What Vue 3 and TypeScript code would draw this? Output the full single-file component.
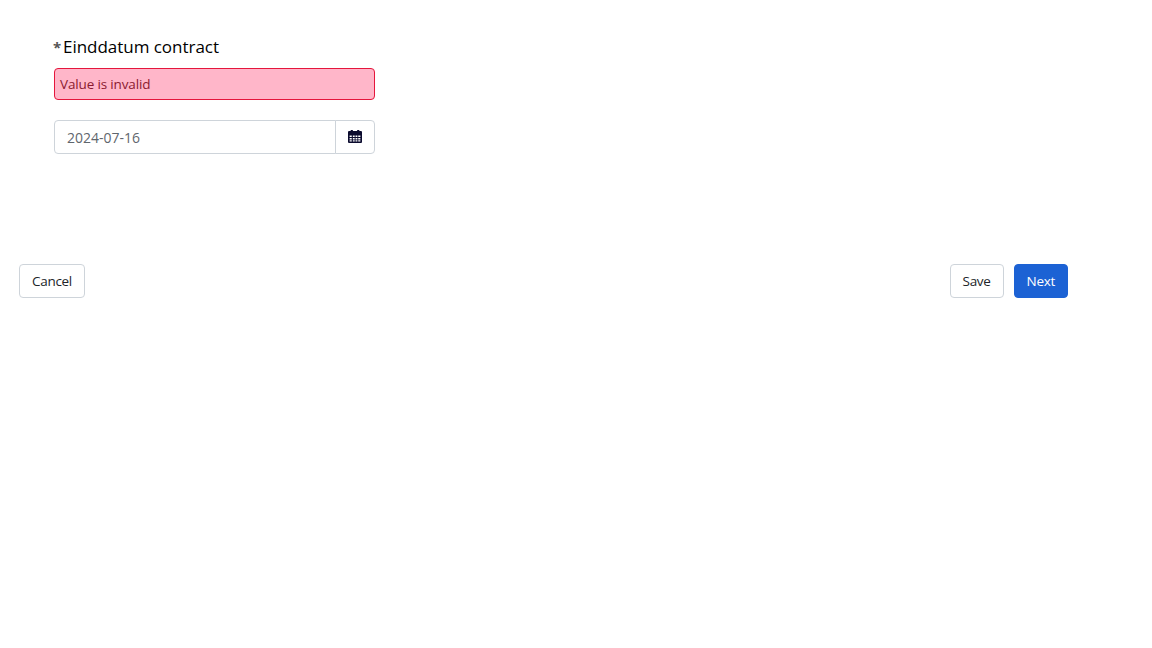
<script setup lang="ts">
const label: string = 'Einddatum contract'
const error: string = 'Value is invalid'
const date: string = '2024-07-16'
</script>

<template>
  <div class="page">
    <form class="form" @submit.prevent>
      <div class="label"><span class="star">*</span><span>{{ label }}</span></div>
      <div class="alert">{{ error }}</div>
      <div class="group">
        <input class="input" type="text" :value="date" />
        <button class="cal" type="button" aria-label="Open calendar">
          <svg width="14" height="14" viewBox="0 0 13 14" preserveAspectRatio="none">
            <path fill="#0b0b2e" d="M0 3a1 1 0 0 1 1-1h1.500V1h2v1h4V1h2v1H12a1 1 0 0 1 1 1v2H0z" />
            <path fill="#0b0b2e" fill-rule="evenodd" d="M0 5h13v8a1 1 0 0 1-1 1H1a1 1 0 0 1-1-1zM1.500 6.500v1.500h2V6.500zM4.500 6.500v1.500h1.700V6.500zM7 6.500v1.500h1.700V6.500zM9.500 6.500v1.500h2V6.500zM1.500 9v1.500h2V9zM4.500 9v1.500h1.700V9zM7 9v1.500h1.700V9zM9.500 9v1.500h2V9zM1.500 11.300v1.300h2v-1.300zM4.500 11.300v1.300h1.700v-1.300zM7 11.300v1.300h1.700v-1.300zM9.500 11.300v1.300h2v-1.300z" />
          </svg>
        </button>
      </div>
    </form>
    <div class="actions">
      <button class="btn" type="button">Cancel</button>
      <div class="right">
        <button class="btn" type="button">Save</button>
        <button class="btn primary" type="button">Next</button>
      </div>
    </div>
  </div>
</template>

<style>
html, body { background: #fff; }
</style>

<style scoped>
.page {
  width: 1152px;
  height: 648px;
  box-sizing: border-box;
  padding: 0 84px 0 19px;
  font-family: "Open Sans", "Noto Sans", sans-serif;
  color: #212529;
  overflow: hidden;
}
.form {
  width: 321px;
  height: 264px;
  box-sizing: border-box;
  margin: 0 0 0 35px;
  padding-top: 35px;
}
.label {
  display: flex;
  align-items: baseline;
  height: 23px;
  line-height: 23px;
  font-size: 17px;
  color: #000;
  letter-spacing: -0.03px;
}
.star {
  width: 9px;
  margin-left: -1px;
  padding-right: 1px;
  box-sizing: content-box;
  color: #555;
  font-size: 15px;
  font-weight: 700;
}
.alert {
  margin-top: 10px;
  height: 32px;
  box-sizing: border-box;
  padding: 0 5px;
  line-height: 30px;
  font-size: 13.500px;
  letter-spacing: -0.15px;
  color: #8b1a30;
  background: #ffb6c9;
  border: 1px solid #e5163c;
  border-radius: 4px;
}
.group {
  display: flex;
  margin-top: 20px;
  height: 34px;
}
.input {
  flex: 1;
  min-width: 0;
  box-sizing: border-box;
  height: 34px;
  padding: 0 12px;
  font: inherit;
  font-size: 14px;
  letter-spacing: 0;
  color: #5f666d;
  background: #fff;
  border: 1px solid #ced4da;
  border-radius: 4px 0 0 4px;
  outline: none;
}
.cal {
  display: flex;
  align-items: center;
  justify-content: center;
  width: 40px;
  height: 34px;
  margin-left: -1px;
  padding: 0 1px 2px 0;
  background: #fff;
  border: 1px solid #ced4da;
  border-radius: 0 4px 4px 0;
}
.actions {
  display: flex;
  justify-content: space-between;
  align-items: center;
}
.right {
  display: flex;
  gap: 10px;
}
.btn {
  height: 34px;
  box-sizing: border-box;
  padding: 0 12px;
  font: inherit;
  font-size: 13.500px;
  letter-spacing: -0.3px;
  color: #212529;
  background: #fff;
  border: 1px solid #ced4da;
  border-radius: 4px;
}
.primary {
  color: #fff;
  background: #1c62d4;
  border-color: #1c62d4;
}
</style>
